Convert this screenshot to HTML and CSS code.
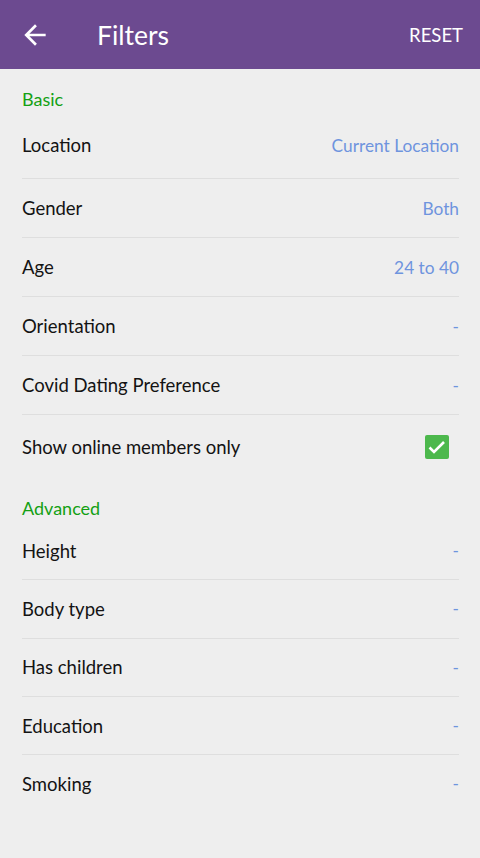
FILE: index.html
```html
<!DOCTYPE html>
<html lang="en">
<head>
    <meta charset="UTF-8">
    <meta name="viewport" content="width=device-width, initial-scale=1.0">
    <title>Filters</title>
    <link rel="stylesheet" href="styles.css">
</head>
<body>
<header class="toolbar">
    <a href="#" class="back">
        <svg width="32" height="32" viewBox="0 0 24 24">
            <path d="M20 11H7.83l5.59-5.59L12 4l-8 8 8 8 1.41-1.41L7.83 13H20v-2z" fill="#fff"/>
        </svg>
    </a>
    <h1 class="title">Filters</h1>
    <a href="#" class="reset">RESET</a>
</header>

<div class="content">
    <div class="section-title">Basic</div>
    <div class="row row-first">
        <span class="label">Location</span>
        <span class="value">Current Location</span>
    </div>
    <div class="row">
        <span class="label">Gender</span>
        <span class="value">Both</span>
    </div>
    <div class="row">
        <span class="label">Age</span>
        <span class="value">24 to 40</span>
    </div>
    <div class="row">
        <span class="label">Orientation</span>
        <span class="value">-</span>
    </div>
    <div class="row">
        <span class="label">Covid Dating Preference</span>
        <span class="value">-</span>
    </div>
    <div class="row row-check">
        <span class="label">Show online members only</span>
        <span class="checkbox">
            <svg width="24" height="24" viewBox="0 0 24 24">
                <path d="M4.5 12.5l4.5 4.5 10-10" fill="none" stroke="#fff" stroke-width="2.6"/>
            </svg>
        </span>
    </div>

    <div class="section-title section-advanced">Advanced</div>
    <div class="row row-small">
        <span class="label">Height</span>
        <span class="value">-</span>
    </div>
    <div class="row row-small">
        <span class="label">Body type</span>
        <span class="value">-</span>
    </div>
    <div class="row row-small">
        <span class="label">Has children</span>
        <span class="value">-</span>
    </div>
    <div class="row row-small">
        <span class="label">Education</span>
        <span class="value">-</span>
    </div>
    <div class="row row-small row-last">
        <span class="label">Smoking</span>
        <span class="value">-</span>
    </div>
</div>
</body>
</html>
```

FILE: styles.css
```css
body {
    font-family: Lato, "Liberation Sans", sans-serif;
    background-color: #eeeeee;
    margin: 0;
}

.toolbar {
    height: 69px;
    background-color: #6c4a90;
    display: flex;
    align-items: center;
    padding: 0 17px 0 19px;
    box-sizing: border-box;
}

.back {
    display: flex;
    width: 32px;
    height: 32px;
}

.title {
    flex: 1;
    margin: 0 0 0 46px;
    font-size: 26.5px;
    font-weight: normal;
    color: #fff;
}

.reset {
    font-size: 18.5px;
    color: #fff;
    text-decoration: none;
}

.content {
    padding: 0 21px 0 22px;
}

.section-title {
    padding: 20px 0 4px;
    line-height: 20px;
    font-size: 18px;
    color: #13a013;
}

.section-advanced {
    padding-bottom: 4px;
}

.row {
    height: 58px;
    display: flex;
    align-items: center;
    justify-content: space-between;
    border-bottom: 1px solid #dedede;
}

/* первая строка чуть выше остальных */
.row-first {
    padding: 3px 0 4px;
}

.row-check {
    height: 63px;
    border-bottom: none;
}

.row-small {
    height: 57.3px;
}

.row-last {
    border-bottom: none;
}

.label {
    font-size: 18.5px;
    color: #131313;
}

.value {
    font-size: 17.3px;
    color: #6e94de;
}

.checkbox {
    width: 24px;
    height: 24px;
    margin-right: 10px;
    border-radius: 2px;
    background-color: #4cb84c;
    display: flex;
}
```
